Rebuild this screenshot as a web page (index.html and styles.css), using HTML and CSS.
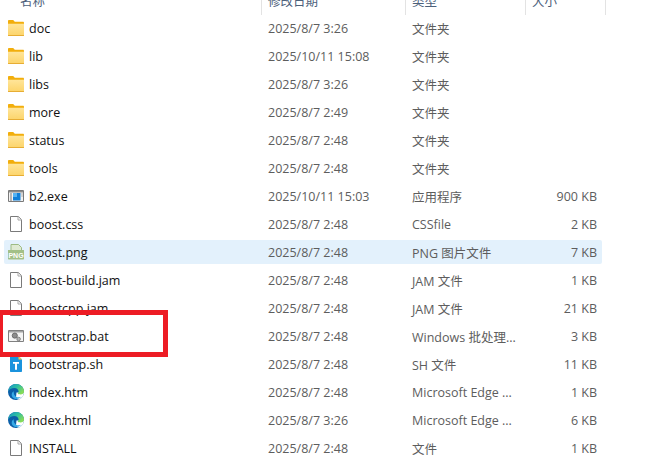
FILE: index.html
```html
<!DOCTYPE html>
<html lang="zh-CN">
<head>
<meta charset="utf-8">
<title>boost</title>
<link rel="stylesheet" href="styles.css">
</head>
<body>
<svg class="defs" width="0" height="0" aria-hidden="true">
  <defs>
    <linearGradient id="fg" x1="0" y1="0" x2="0" y2="1"><stop offset="0" stop-color="#ffe59a"/><stop offset="1" stop-color="#fcd469"/></linearGradient>
    <symbol id="folder" viewBox="0 0 16 13" preserveAspectRatio="none">
      <path d="M0 1C0 .4.4 0 1 0h4.200l1.600 1.500H15c.6 0 1 .4 1 1V5H0z" fill="#f2ae0c"/>
      <path d="M0 3h16v9c0 .6-.4 1-1 1H1c-.6 0-1-.4-1-1z" fill="url(#fg)"/>
      <path d="M0 12.300h16V13H0z" fill="#e3a72c"/>
    </symbol>
    <symbol id="doc" viewBox="0 0 14 16">
      <path d="M1.500.5h7.800l3.200 3.200v11.800h-11z" fill="#fff" stroke="#7a7a7a"/>
      <path d="M9 .5v3.500h3.500" fill="none" stroke="#a8a8a8"/>
    </symbol>
    <symbol id="exe" viewBox="0 0 16 12">
      <path d="M.5.5h15v11H.5z" fill="#f2f2f2" stroke="#7a7a7a"/>
      <path d="M1 1h14v1.500H1z" fill="#8b8b8b"/>
      <path d="M5 3h7.500v7.500H5z" fill="#0f7fd8"/>
      <path d="M5 3h4v4H5z" fill="#55b2f2"/>
      <path d="M2 4h2M2 6h2M2 8h2M2 10h2M13.500 4h1M13.500 6h1" stroke="#777"/>
    </symbol>
    <symbol id="png" viewBox="0 0 16 16">
      <path d="M3 .5h7.500l3 3V7H3z" fill="#dfead3" stroke="#9dbb84"/>
      <path d="M0 6h16v8.500c0 .6-.4 1-1 1H1c-.6 0-1-.4-1-1z" fill="#a3c088"/>
      <text x="8" y="13.600" class="pngt">PNG</text>
    </symbol>
    <symbol id="bat" viewBox="0 0 16 12">
      <path d="M.5.5h15v11H.5z" fill="#f4f4f4" stroke="#808080"/>
      <path d="M1 1h14v1.500H1z" fill="#a5a5a5"/>
      <circle cx="6.800" cy="5.600" r="2.600" fill="#8d8d8d" stroke="#555" stroke-width=".7"/>
      <circle cx="10.600" cy="9" r="1.800" fill="#b5b5b5" stroke="#666" stroke-width=".7"/>
    </symbol>
    <symbol id="sh" viewBox="0 0 14 16">
      <path d="M1 1c0-.6.4-1 1-1h7.500L13 3.500V15c0 .6-.4 1-1 1H2c-.6 0-1-.4-1-1z" fill="#1a93dd"/>
      <path d="M9.500 0L13 3.500H9.500z" fill="#f7c948"/>
      <path d="M4 6h6v1.800H8v6H6v-6H4z" fill="#fff"/>
    </symbol>
    <linearGradient id="eg1" x1="0" y1="0" x2="1" y2=".6"><stop offset="0" stop-color="#1493c9"/><stop offset=".55" stop-color="#2fc0a0"/><stop offset="1" stop-color="#86dc58"/></linearGradient>
    <symbol id="edge" viewBox="0 0 16 16">
      <circle cx="8" cy="8" r="8" fill="#0b5fa8"/>
      <path d="M8.500 8.500h7.400A8 8 0 0 1 10 15.700L8 13z" fill="#fff"/>
      <path d="M.1 7.400C.8 3 4.200 0 8 0c4.500 0 8 3.300 8 7.500 0 2-1.700 3-3.600 3-1.300 0-2.300-.4-2.800-.9.700-.5 1-1.200 1-2C10.600 5.600 8.700 4 6.500 4 3.500 4 1.100 5.400.1 7.400z" fill="url(#eg1)"/>
      <path d="M5.800 7.200c-1.500.7-2.100 2.200-2.100 3.500 0 2.500 2.200 4.300 4.600 4.300 1.800 0 3.600-.8 4.800-2.200-1 .4-2 .6-3 .5-2.600-.1-4.700-2.600-4.300-6.100z" fill="#36a9e6"/>
    </symbol>
  </defs>
</svg>
<main class="explorer">
  <div class="head">
    <div class="hcell hname">名称</div>
    <div class="hcell">修改日期</div>
    <div class="hcell">类型</div>
    <div class="hcell">大小</div>
  </div>
  <div class="rows">
    <div class="row"><span class="name"><svg class="ico"><use href="#folder"/></svg><span>doc</span></span><span class="date">2025/8/7 3:26</span><span class="type">文件夹</span><span class="size"></span></div>
    <div class="row"><span class="name"><svg class="ico"><use href="#folder"/></svg><span>lib</span></span><span class="date">2025/10/11 15:08</span><span class="type">文件夹</span><span class="size"></span></div>
    <div class="row"><span class="name"><svg class="ico"><use href="#folder"/></svg><span>libs</span></span><span class="date">2025/8/7 3:26</span><span class="type">文件夹</span><span class="size"></span></div>
    <div class="row"><span class="name"><svg class="ico"><use href="#folder"/></svg><span>more</span></span><span class="date">2025/8/7 2:49</span><span class="type">文件夹</span><span class="size"></span></div>
    <div class="row"><span class="name"><svg class="ico"><use href="#folder"/></svg><span>status</span></span><span class="date">2025/8/7 2:48</span><span class="type">文件夹</span><span class="size"></span></div>
    <div class="row"><span class="name"><svg class="ico"><use href="#folder"/></svg><span>tools</span></span><span class="date">2025/8/7 2:48</span><span class="type">文件夹</span><span class="size"></span></div>
    <div class="row"><span class="name"><svg class="ico"><use href="#exe"/></svg><span>b2.exe</span></span><span class="date">2025/10/11 15:03</span><span class="type">应用程序</span><span class="size">900 KB</span></div>
    <div class="row"><span class="name"><svg class="ico"><use href="#doc"/></svg><span>boost.css</span></span><span class="date">2025/8/7 2:48</span><span class="type">CSSfile</span><span class="size">2 KB</span></div>
    <div class="row hover"><span class="name"><svg class="ico"><use href="#png"/></svg><span>boost.png</span></span><span class="date">2025/8/7 2:48</span><span class="type">PNG 图片文件</span><span class="size">7 KB</span></div>
    <div class="row"><span class="name"><svg class="ico"><use href="#doc"/></svg><span>boost-build.jam</span></span><span class="date">2025/8/7 2:48</span><span class="type">JAM 文件</span><span class="size">1 KB</span></div>
    <div class="row"><span class="name"><svg class="ico"><use href="#doc"/></svg><span>boostcpp.jam</span></span><span class="date">2025/8/7 2:48</span><span class="type">JAM 文件</span><span class="size">21 KB</span></div>
    <div class="row"><span class="name"><svg class="ico"><use href="#bat"/></svg><span>bootstrap.bat</span></span><span class="date">2025/8/7 2:48</span><span class="type">Windows 批处理...</span><span class="size">3 KB</span></div>
    <div class="row"><span class="name"><svg class="ico"><use href="#sh"/></svg><span>bootstrap.sh</span></span><span class="date">2025/8/7 2:48</span><span class="type">SH 文件</span><span class="size">11 KB</span></div>
    <div class="row"><span class="name"><svg class="ico"><use href="#edge"/></svg><span>index.htm</span></span><span class="date">2025/8/7 2:48</span><span class="type">Microsoft Edge ...</span><span class="size">1 KB</span></div>
    <div class="row"><span class="name"><svg class="ico"><use href="#edge"/></svg><span>index.html</span></span><span class="date">2025/8/7 3:26</span><span class="type">Microsoft Edge ...</span><span class="size">6 KB</span></div>
    <div class="row"><span class="name"><svg class="ico"><use href="#doc"/></svg><span>INSTALL</span></span><span class="date">2025/8/7 2:48</span><span class="type">文件</span><span class="size">1 KB</span></div>
  </div>
  <div class="redbox"></div>
</main>
</body>
</html>
```
FILE: styles.css
```css
html, body {
  margin: 0;
  padding: 0;
  background: #fff;
}
body {
  width: 650px;
  height: 466px;
  overflow: hidden;
  font-family: "Open Sans", "Noto Sans CJK SC", sans-serif;
  font-size: 12.5px;
}
.defs { position: absolute; }
.pngt {
  font-family: "Liberation Sans", sans-serif;
  font-size: 7px;
  font-weight: 700;
  fill: #fff;
  text-anchor: middle;
}
.explorer {
  position: relative;
  width: 650px;
  height: 466px;
  overflow: hidden;
}
.head {
  display: grid;
  grid-template-columns: 262px 144px 120px 80px;
  height: 15px;
  overflow: hidden;
}
.hcell {
  height: 15px;
  box-sizing: border-box;
  padding-left: 6px;
  color: #4c607a;
  line-height: 4px;
  border-right: 1px solid #e3e3e3;
  white-space: nowrap;
}
.hcell.hname { padding-left: 20px; }
.rows {
  display: flex;
  flex-direction: column;
  gap: 4px;
  margin-top: 1px;
  width: 598px;
  margin-left: 4px;
}
.row {
  display: grid;
  grid-template-columns: 257px 144px 120px 72px;
  height: 24px;
  align-items: center;
  border-radius: 2px;
  white-space: nowrap;
}
.row.hover { background: #e3f1fc; }
.name {
  display: flex;
  align-items: center;
  gap: 5px;
  padding-left: 4px;
  color: #111;
}
.ico { width: 16px; height: 16px; flex: none; }
.date { padding-left: 7px; color: #5d5d5d; }
.type { padding-left: 7px; color: #5d5d5d; overflow: hidden; }
.size { text-align: right; color: #5d5d5d; }
.redbox {
  position: absolute;
  left: 0;
  top: 310px;
  width: 168px;
  height: 47px;
  box-sizing: border-box;
  border: 5px solid #ed1c24;
  border-left-width: 3px;
}
```
